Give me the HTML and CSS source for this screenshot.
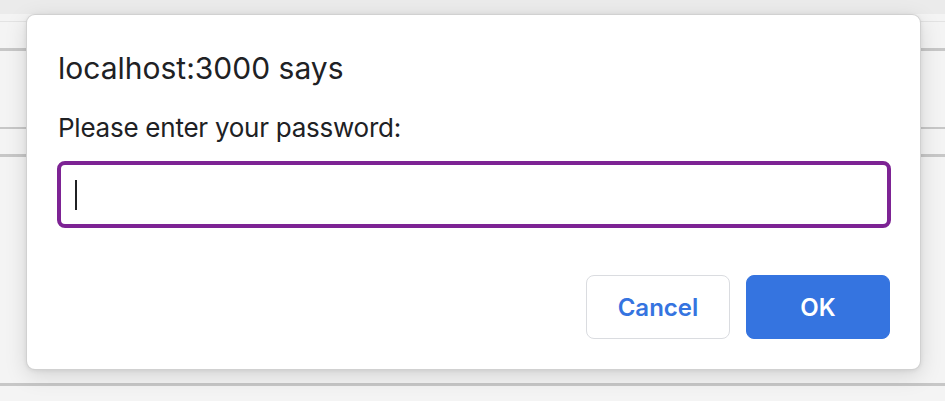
FILE: index.html
```html
<!DOCTYPE html>
<html lang="en">
<head>
<meta charset="utf-8">
<title>localhost:3000 says</title>
<link rel="stylesheet" href="styles.css">
</head>
<body>
  <div class="backdrop">
    <div class="topbar"></div>
    <div class="rule rule-1"></div>
    <div class="rule rule-2"></div>
    <div class="rule rule-3"></div>
    <div class="rule rule-4"></div>
    <div class="rule rule-5"></div>
  </div>

  <div class="dialog" role="dialog" aria-labelledby="dlg-title">
    <h1 class="dialog-title" id="dlg-title">localhost:3000 says</h1>
    <p class="dialog-message">Please enter your password:</p>
    <div class="field"><span class="caret"></span></div>
    <div class="actions">
      <button class="btn btn-cancel" type="button">Cancel</button>
      <button class="btn btn-ok" type="button">OK</button>
    </div>
  </div>
</body>
</html>
```

FILE: styles.css
```css
* {
  box-sizing: border-box;
}

html, body {
  margin: 0;
  padding: 0;
}

body {
  width: 945px;
  height: 401px;
  overflow: hidden;
  background: #f4f4f4;
  font-family: Inter, "Noto Sans", "Liberation Sans", sans-serif;
  color: #202124;
  position: relative;
}

/* page behind the dialog */
.backdrop {
  display: flex;
  flex-direction: column;
}

.topbar {
  height: 14px;
  background: #ebebeb;
}

.rule {
  background: #c7c7c7;
  height: 3px;
}

.rule-1 {
  margin-top: 7px;
  height: 1px;
  background: #e3e3e3;
}

.rule-2 {
  margin-top: 26px;
}

.rule-3 {
  margin-top: 76px;
  height: 2px;
}

.rule-4 {
  margin-top: 25px;
}

.rule-5 {
  margin-top: 226px;
}

/* dialog */
.dialog {
  position: absolute;
  left: 26px;
  top: 14px;
  width: 895px;
  height: 356px;
  background: #ffffff;
  border: 1px solid rgba(0, 0, 0, 0.18);
  border-radius: 9px;
  box-shadow: 0 6px 22px rgba(0, 0, 0, 0.13), 0 1px 4px rgba(0, 0, 0, 0.08);
  padding: 35px 29px 30px 30px;
  display: flex;
  flex-direction: column;
}

.dialog-title {
  margin: 0;
  font-size: 30px;
  line-height: 36px;
  font-weight: 400;
  padding-left: 1px;
  color: #202124;
}

.dialog-message {
  margin: 26px 0 0;
  font-size: 26px;
  line-height: 32px;
  font-weight: 400;
  letter-spacing: -0.25px;
  padding-left: 1px;
  color: #202124;
}

.field {
  margin-top: 17px;
  height: 67px;
  border: 4px solid #7d2394;
  border-radius: 8px;
  display: flex;
  align-items: center;
  padding-left: 14px;
}

.caret {
  width: 2px;
  height: 30px;
  background: #202124;
}

.actions {
  margin-top: auto;
  display: flex;
  justify-content: flex-end;
  gap: 16px;
  padding-right: 1px;
}

.btn {
  width: 144px;
  height: 64px;
  border-radius: 8px;
  font-family: inherit;
  font-size: 24px;
  font-weight: 600;
  cursor: pointer;
}

.btn-cancel {
  background: #ffffff;
  border: 1px solid #dadce0;
  color: #3574e0;
}

.btn-ok {
  background: #3574e0;
  border: 1px solid #3574e0;
  color: #ffffff;
}
```
